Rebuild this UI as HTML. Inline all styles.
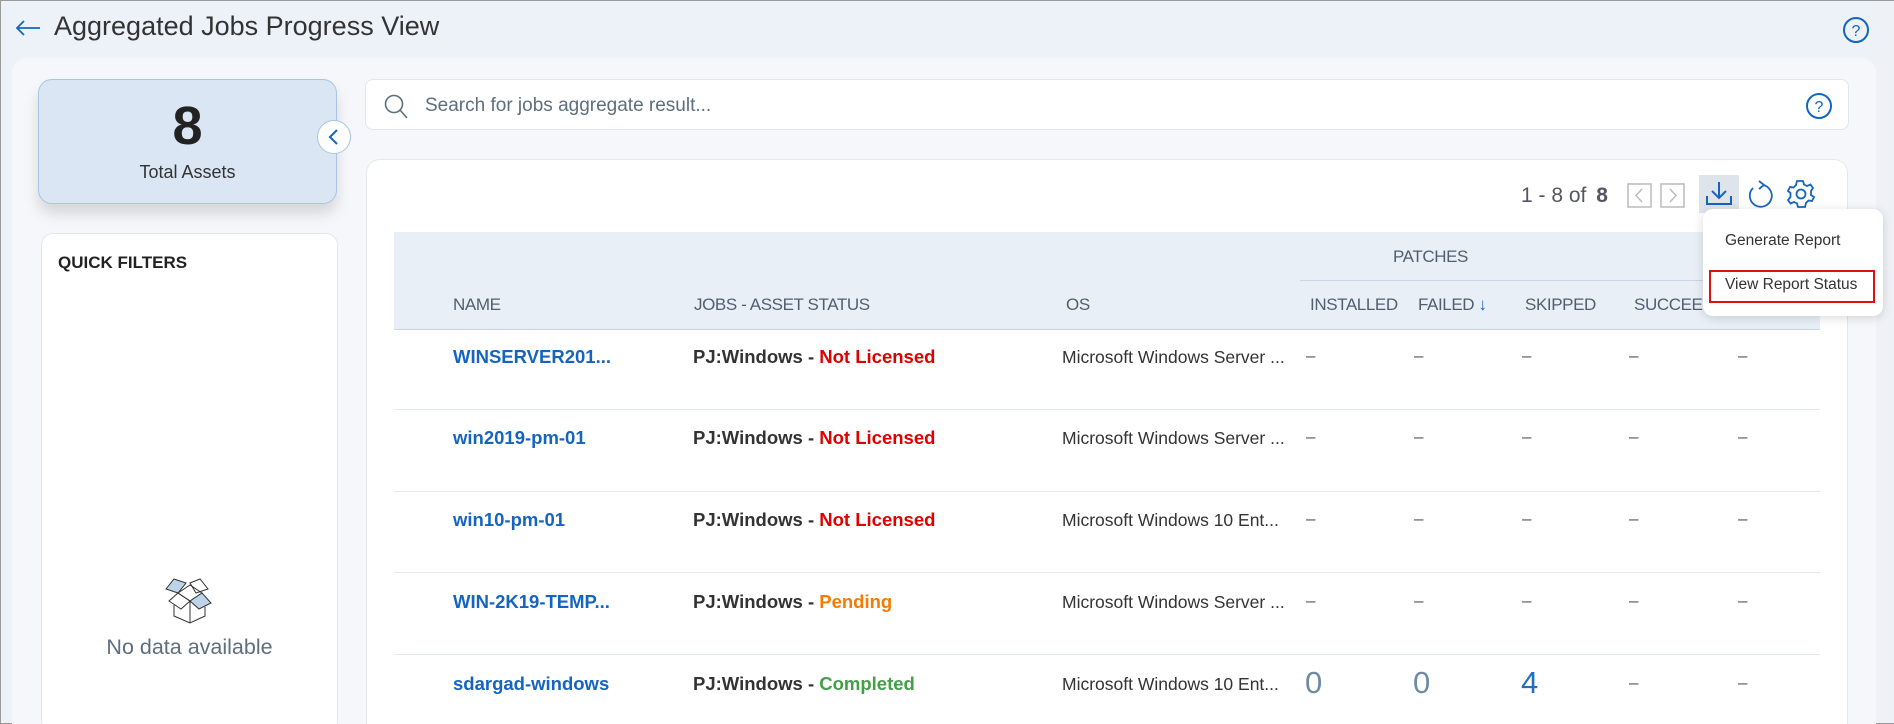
<!DOCTYPE html>
<html style="overflow:hidden;height:724px"><head><meta charset="utf-8"><style>
*{box-sizing:border-box;margin:0;padding:0}
body{width:1894px;height:724px;overflow:hidden;background:#edf2f9;font-family:"Liberation Sans",sans-serif;position:relative;border:1px solid #9a9a9a}
.abs{position:absolute}
.panel{left:11px;top:57px;width:1864px;height:666px;background:#f5f7fa;border-radius:14px 14px 0 0}
.scroll{left:1875px;top:0;width:18px;height:722px;background:#eef1f5}
.card{left:37px;top:78px;width:299px;height:125px;background:#dae6f3;border:1px solid #a9c4e4;border-radius:14px;box-shadow:0 10px 14px rgba(0,0,0,.13);text-align:center}
.qf{left:40px;top:232px;width:297px;height:500px;background:#fff;border:1px solid #e3e8ee;border-radius:12px}
.search{left:364px;top:78px;width:1484px;height:51px;background:#fff;border:1px solid #e1e6ec;border-radius:8px}
.tcard{left:365px;top:158px;width:1482px;height:580px;background:#fff;border:1px solid #e3e8ee;border-radius:14px}
.th{left:393px;top:231px;width:1426px;height:98px;background:#e9eff7;border-bottom:1px solid #c9d6e6}
.hd{position:absolute;font-size:17px;color:#4f5f6f;top:294px;letter-spacing:-.4px}
.row{position:absolute;left:393px;width:1426px;height:1px;background:#e3e9ef}
.nm{position:absolute;left:452px;font-size:18.5px;font-weight:bold;color:#1565c0}
.jb{position:absolute;left:692px;font-size:18.5px;font-weight:bold;color:#333}
.os{position:absolute;left:1061px;font-size:17.5px;color:#333}
.ds{position:absolute;font-size:17px;color:#555}
.big{position:absolute;font-size:31px;color:#6f8aa5;font-weight:300}
</style></head><body>
<div class="abs panel"></div>
<div class="abs scroll"></div>
<svg class="abs" style="left:13px;top:17px" width="28" height="20"><path d="M26 10H3M10 3L3 10L10 17" stroke="#1565c0" stroke-width="1.8" fill="none"/></svg>
<div class="abs" style="left:53px;top:10px;font-size:27px;color:#333">Aggregated Jobs Progress View</div>
<svg class="abs" style="left:1841px;top:15px" width="28" height="28"><circle cx="14" cy="14" r="12" stroke="#1565c0" stroke-width="2" fill="none"/><text x="14" y="20" text-anchor="middle" font-size="16" fill="#1565c0" font-family="Liberation Sans">?</text></svg>

<div class="abs card"><div style="font-size:54px;font-weight:bold;color:#222;margin-top:16px;line-height:60px">8</div><div style="font-size:18px;color:#333;margin-top:6px">Total Assets</div></div>
<svg class="abs" style="left:315px;top:118px" width="36" height="36"><circle cx="18" cy="18" r="16.5" fill="#fff" stroke="#a9c4e4"/><path d="M21 11L14 18L21 25" stroke="#1565c0" stroke-width="2" fill="none"/></svg>

<div class="abs qf"></div>
<div class="abs" style="left:57px;top:252px;font-size:17px;font-weight:bold;color:#222">QUICK FILTERS</div>
<svg class="abs" style="left:163px;top:576px" width="52" height="48" fill="none" stroke="#333" stroke-width="1"><path d="M2 12L10 2L22 6L14 16Z" fill="#bcd3ea"/><path d="M26 6L36 2L44 12L32 16Z"/><path d="M14 16L26 8L38 16L26 24Z"/><path d="M5 24L14 16L26 24L17 32Z"/><path d="M26 24L38 16L47 26L35 32Z" fill="#bcd3ea"/><path d="M10 28V39L26 46L41 39V30M26 24V46"/></svg>
<div class="abs" style="left:0;width:377px;text-align:center;top:634px;font-size:21.5px;color:#5d6e7e">No data available</div>

<div class="abs search"></div>
<svg class="abs" style="left:381px;top:92px" width="28" height="28" fill="none" stroke="#5d6e7e" stroke-width="1.6"><circle cx="12" cy="11" r="8.5"/><path d="M18 17L25 25"/></svg>
<div class="abs" style="left:424px;top:94px;font-size:19px;color:#5d6e7e">Search for jobs aggregate result...</div>
<svg class="abs" style="left:1804px;top:91px" width="28" height="28"><circle cx="14" cy="14" r="12" stroke="#1565c0" stroke-width="2" fill="none"/><text x="14" y="20" text-anchor="middle" font-size="16" fill="#1565c0" font-family="Liberation Sans">?</text></svg>

<div class="abs tcard"></div>
<div class="abs" style="left:1520px;top:183px;font-size:21px;color:#556"><span>1 - 8 of </span><b style="margin-left:4px">8</b></div>
<svg class="abs" style="left:1626px;top:181px" width="60" height="28" fill="none"><rect x="1" y="2" width="23" height="23" stroke="#bbb" stroke-width="1.5"/><path d="M15 7L9 13.5L15 20" stroke="#bbb" stroke-width="1.5"/><rect x="34" y="2" width="23" height="23" stroke="#bbb" stroke-width="1.5"/><path d="M43 7L49 13.5L43 20" stroke="#bbb" stroke-width="1.5"/></svg>
<div class="abs" style="left:1698px;top:174px;width:40px;height:38px;background:#dfe4ea"></div>
<svg class="abs" style="left:1703px;top:178px" width="30" height="30" fill="none" stroke="#1565c0" stroke-width="2"><path d="M15 3V19M8 12L15 19L22 12M3 17V25H27V17"/></svg>
<svg class="abs" style="left:1744px;top:178px" width="30" height="32" fill="none" stroke="#1565c0" stroke-width="1.8"><path d="M18 6A11 11 0 1 1 8 9"/><path d="M14 2L19 6L14 10"/></svg>
<svg class="abs" style="left:1785px;top:178px" width="30" height="30" fill="none" stroke="#1565c0" stroke-width="1.8"><circle cx="15" cy="15" r="4.5"/><path d="M13 2H17L18 5.5L21 7L24.5 5.5L27 9L25 12L25 16L28 18L26 22L22.5 21.5L20 24L19 28H15L12 28L11 24.5L8 23L4.5 24.5L2 21L4.5 18L4.5 14L2 12L4 8L7.5 8.5L10 6L11 2Z"/></svg>

<div class="abs th"></div>
<div class="abs" style="left:1299px;top:279px;width:520px;height:1px;background:#c9d6e6"></div>
<div class="hd" style="left:1392px;top:246px">PATCHES</div>
<div class="hd" style="left:452px">NAME</div>
<div class="hd" style="left:693px">JOBS - ASSET STATUS</div>
<div class="hd" style="left:1065px">OS</div>
<div class="hd" style="left:1309px">INSTALLED</div>
<div class="hd" style="left:1417px">FAILED <span style="color:#1565c0">↓</span></div>
<div class="hd" style="left:1524px">SKIPPED</div>
<div class="hd" style="left:1633px">SUCCEED</div>

<div class="row" style="top:408px"></div><div class="row" style="top:490px"></div><div class="row" style="top:571px"></div><div class="row" style="top:653px"></div>

<div class="nm" style="top:345px">WINSERVER201...</div>
<div class="jb" style="top:345px">PJ:Windows - <span style="color:#e00000">Not Licensed</span></div>
<div class="os" style="top:346px">Microsoft Windows Server ...</div>
<div class="nm" style="top:426px">win2019-pm-01</div>
<div class="jb" style="top:426px">PJ:Windows - <span style="color:#e00000">Not Licensed</span></div>
<div class="os" style="top:427px">Microsoft Windows Server ...</div>
<div class="nm" style="top:508px">win10-pm-01</div>
<div class="jb" style="top:508px">PJ:Windows - <span style="color:#e00000">Not Licensed</span></div>
<div class="os" style="top:509px">Microsoft Windows 10 Ent...</div>
<div class="nm" style="top:590px">WIN-2K19-TEMP...</div>
<div class="jb" style="top:590px">PJ:Windows - <span style="color:#f57c00">Pending</span></div>
<div class="os" style="top:591px">Microsoft Windows Server ...</div>
<div class="nm" style="top:672px">sdargad-windows</div>
<div class="jb" style="top:672px">PJ:Windows - <span style="color:#43a047">Completed</span></div>
<div class="os" style="top:673px">Microsoft Windows 10 Ent...</div>

<div class="ds" style="left:1305px;top:345px">–</div><div class="ds" style="left:1413px;top:345px">–</div><div class="ds" style="left:1521px;top:345px">–</div><div class="ds" style="left:1628px;top:345px">–</div><div class="ds" style="left:1737px;top:345px">–</div>
<div class="ds" style="left:1305px;top:426px">–</div><div class="ds" style="left:1413px;top:426px">–</div><div class="ds" style="left:1521px;top:426px">–</div><div class="ds" style="left:1628px;top:426px">–</div><div class="ds" style="left:1737px;top:426px">–</div>
<div class="ds" style="left:1305px;top:508px">–</div><div class="ds" style="left:1413px;top:508px">–</div><div class="ds" style="left:1521px;top:508px">–</div><div class="ds" style="left:1628px;top:508px">–</div><div class="ds" style="left:1737px;top:508px">–</div>
<div class="ds" style="left:1305px;top:590px">–</div><div class="ds" style="left:1413px;top:590px">–</div><div class="ds" style="left:1521px;top:590px">–</div><div class="ds" style="left:1628px;top:590px">–</div><div class="ds" style="left:1737px;top:590px">–</div>
<div class="big" style="left:1304px;top:664px">0</div><div class="big" style="left:1412px;top:664px">0</div><div class="big" style="left:1520px;top:664px;color:#1e6fc2">4</div>
<div class="ds" style="left:1628px;top:672px">–</div><div class="ds" style="left:1737px;top:672px">–</div>

<div class="abs" style="left:1702px;top:208px;width:180px;height:107px;background:#fff;border-radius:10px;box-shadow:0 2px 10px rgba(0,0,0,.15)"></div>
<div class="abs" style="left:1724px;top:231px;font-size:15.5px;color:#333">Generate Report</div>
<div class="abs" style="left:1708px;top:269px;width:166px;height:33px;border:2px solid #e01010"></div>
<div class="abs" style="left:1724px;top:275px;font-size:15.5px;color:#333">View Report Status</div>
</body></html>
